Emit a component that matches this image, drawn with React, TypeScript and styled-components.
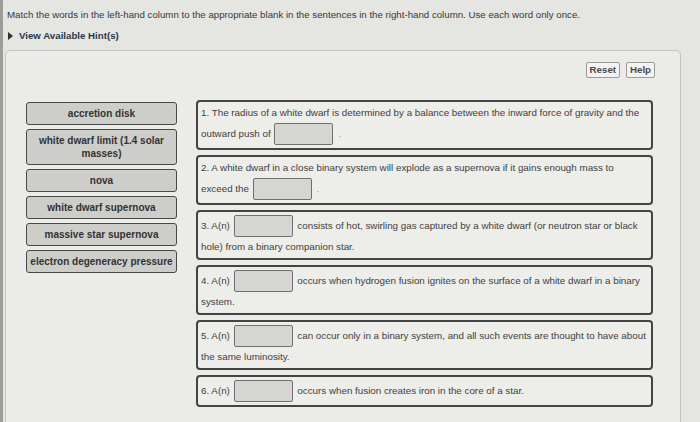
import styled, { createGlobalStyle } from 'styled-components';

const GlobalStyle = createGlobalStyle`
  html, body {
    margin: 0;
    padding: 0;
    background: #e5e5e1;
    overflow: hidden;
  }
  body {
    font-family: 'Liberation Sans', Arial, sans-serif;
    color: #3a3a3a;
  }
`;

const words = [
  'accretion disk',
  'white dwarf limit (1.4 solar masses)',
  'nova',
  'white dwarf supernova',
  'massive star supernova',
  'electron degeneracy pressure',
];

type Sentence = {
  before: string;
  after: string;
  faintAfter?: boolean;
};

const sentences: Sentence[] = [
  {
    before:
      '1. The radius of a white dwarf is determined by a balance between the inward force of gravity and the outward push of',
    after: '.',
    faintAfter: true,
  },
  {
    before:
      '2. A white dwarf in a close binary system will explode as a supernova if it gains enough mass to exceed the',
    after: '.',
    faintAfter: true,
  },
  {
    before: '3. A(n)',
    after:
      'consists of hot, swirling gas captured by a white dwarf (or neutron star or black hole) from a binary companion star.',
  },
  {
    before: '4. A(n)',
    after: 'occurs when hydrogen fusion ignites on the surface of a white dwarf in a binary system.',
  },
  {
    before: '5. A(n)',
    after:
      'can occur only in a binary system, and all such events are thought to have about the same luminosity.',
  },
  {
    before: '6. A(n)',
    after: 'occurs when fusion creates iron in the core of a star.',
  },
];

export default function App() {
  return (
    <Page>
      <GlobalStyle />
      <Instructions>
        Match the words in the left-hand column to the appropriate blank in the sentences in the
        right-hand column. Use each word only once.
      </Instructions>
      <HintToggle>
        <Caret />
        View Available Hint(s)
      </HintToggle>
      <Panel>
        <Toolbar>
          <ToolButton>Reset</ToolButton>
          <ToolButton>Help</ToolButton>
        </Toolbar>
        <Board>
          <WordBank>
            {words.map((w) => (
              <WordTile key={w}>{w}</WordTile>
            ))}
          </WordBank>
          <SentenceList>
            {sentences.map((s, i) => (
              <SentenceBox key={i}>
                {s.before} <Blank />{' '}
                {s.faintAfter ? <Faint>{s.after}</Faint> : s.after}
              </SentenceBox>
            ))}
          </SentenceList>
        </Board>
      </Panel>
    </Page>
  );
}

const Page = styled.div`
  min-height: 422px;
  border-left: 3px solid #9c9c98;
  padding-top: 9px;
`;

const Instructions = styled.div`
  margin-left: 4px;
  font-size: 9.7px;
  line-height: 12px;
  color: #383838;
`;

const HintToggle = styled.div`
  display: flex;
  align-items: center;
  gap: 6px;
  margin: 9px 0 0 5px;
  font-size: 9.7px;
  font-weight: bold;
  line-height: 12px;
  color: #2a384a;
`;

const Caret = styled.span`
  width: 0;
  height: 0;
  border-left: 5px solid #2a2f38;
  border-top: 4px solid transparent;
  border-bottom: 4px solid transparent;
`;

const Panel = styled.div`
  margin: 8px 0 0 2px;
  width: 676px;
  height: 390px;
  box-sizing: border-box;
  background: #ebebe8;
  border: 1px solid #c4c4c0;
  border-radius: 5px;
  padding: 11px 25px 0 20px;
`;

const Toolbar = styled.div`
  display: flex;
  justify-content: flex-end;
  gap: 6px;
`;

const ToolButton = styled.button`
  font-family: 'Liberation Sans', Arial, sans-serif;
  font-size: 9.7px;
  font-weight: bold;
  color: #4a4a4a;
  background: #f3f3f1;
  border: 1px solid #9a9a9a;
  border-radius: 2px;
  height: 16px;
  padding: 0 3px;
  line-height: 14px;
`;

const Board = styled.div`
  display: flex;
  align-items: flex-start;
  gap: 19px;
  margin-top: 22px;
`;

const WordBank = styled.div`
  display: flex;
  flex-direction: column;
  gap: 4px;
  width: 151px;
  margin-top: 2px;
`;

const WordTile = styled.div`
  background: #cdcdca;
  border: 1px solid #484848;
  border-radius: 3px;
  padding: 4px 2px;
  font-size: 10px;
  font-weight: bold;
  line-height: 13px;
  text-align: center;
  color: #333;
`;

const SentenceList = styled.div`
  display: flex;
  flex-direction: column;
  gap: 5px;
  width: 457px;
`;

const SentenceBox = styled.div`
  background: #edede9;
  border: 2px solid #444;
  border-radius: 4px;
  padding: 2px 3px;
  font-size: 9.8px;
  line-height: 18px;
  color: #414141;
`;

const Blank = styled.span`
  display: inline-block;
  box-sizing: border-box;
  width: 59px;
  height: 22px;
  margin: 1px 2px 1px 1px;
  vertical-align: middle;
  background: #d5d5d2;
  border: 1px solid #707070;
  border-radius: 2px;
`;

const Faint = styled.span`
  color: #9a9a9a;
`;
